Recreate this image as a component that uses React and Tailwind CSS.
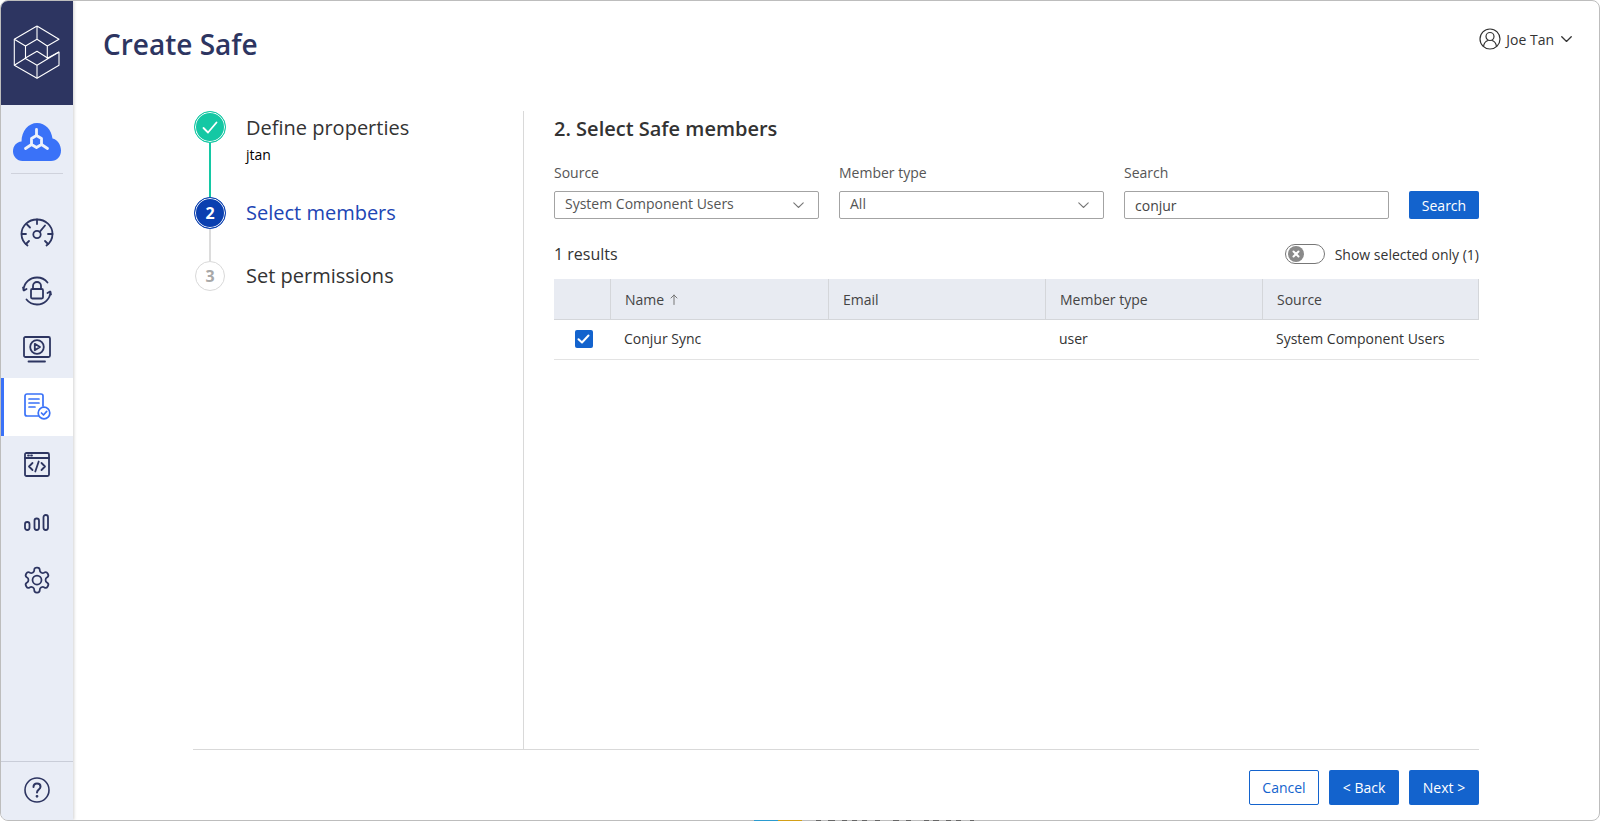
import React from 'react';

const S = '#2d3561';

function Logo() {
  return (
    <svg width="72" height="104" viewBox="0 0 72 104" fill="none" stroke="#fff" strokeWidth="1.100" strokeLinejoin="round">
      <g transform="translate(-1,0)">
        <path d="M37 25 14.300 38.300v26L37 77.300l22-13V51L37 64.300l-12-7 12-7 11 7" />
        <path d="M37 25l22 13.300-11.700 6.700L37 38.300 25.500 45 14.300 38.300M37 25v13.300M25.500 45v12.300M47.300 45v12.300L59 51M14.300 64.300l11.200-7M37 64.300v13" />
      </g>
    </svg>
  );
}

function Cloud() {
  return (
    <svg width="50" height="40" viewBox="0 0 50 40" fill="none">
      <path d="M10.500 39C5 39 1 34.500 1 29.300 1 24 4.500 20 9.500 19.500 9.500 9 16.500 1 25 1S39.500 8 40.500 16.500C45.500 17.500 49 23 49 28.500 49 34.500 45 39 39 39Z" fill="#3a72f8" />
      <g stroke="#eef2fb" strokeWidth="2.800" strokeLinecap="round" strokeLinejoin="round">
        <path d="M24.500 13.500l5 3v6l-5 3-5-3v-6Z" />
        <path d="M24.500 7.500v6M29.500 22.500l6 4M19.500 22.500l-6 4" />
      </g>
    </svg>
  );
}

const sw = { fill: 'none', stroke: S, strokeWidth: 1.800, strokeLinecap: 'round', strokeLinejoin: 'round' };

function Gauge() {
  return (
    <svg width="34" height="30" viewBox="0 0 34 30" {...sw}>
      <path d="M7.500 27.500C3.500 24.500 1.500 20.500 1.500 16 1.500 7.500 8.500 1.500 17 1.500S32.500 7.500 32.500 16c0 4.500-2 8.500-6 11.500" />
      <circle cx="17" cy="16.500" r="3.700" />
      <path d="M19.700 13.800 25 7.500M17 1.500v4.500M1.700 16h4.300M28 16h4.500M6 26l3-3M28 26l-3-3M7 6.500l3 3" />
    </svg>
  );
}
function LockCycle() {
  return (
    <svg width="30" height="30" viewBox="0 0 30 30" {...sw}>
      <path d="M1.500 14C2 7 7.500 1.500 15 1.500c4.500 0 8 1.800 10.500 5M28.500 16c-.5 7-6 12.500-13.500 12.500-4.500 0-8-1.800-10.500-5" />
      <path d="M1 11.500l1 3 2.500-1.500M29 18.500l-1-3-2.500 1.500" />
      <rect x="9" y="13" width="12" height="9.500" rx="1.200" />
      <path d="M11 13v-3a4 4 0 0 1 8 0v3" />
    </svg>
  );
}
function Screen() {
  return (
    <svg width="28" height="27" viewBox="0 0 28 27" {...sw}>
      <rect x="1" y="1" width="26" height="20" rx="1.500" />
      <circle cx="14" cy="11" r="6.800" />
      <path d="M11.800 7.800l5.200 3.200-5.200 3.200Z" />
      <path d="M5.500 25.500h16.500" />
    </svg>
  );
}
function Doc() {
  return (
    <svg width="27" height="27" viewBox="0 0 27 27" fill="none" stroke="#3a72f8" strokeWidth="1.700" strokeLinecap="round" strokeLinejoin="round">
      <path d="M14 23H3a2 2 0 0 1-2-2V3a2 2 0 0 1 2-2h14a2 2 0 0 1 2 2v10" />
      <path d="M5 6h10M5 10h10M5 14h6" />
      <circle cx="20" cy="20" r="5.800" fill="#fff" />
      <path d="M17.500 20l2 2 3.200-3.600" />
    </svg>
  );
}
function Code() {
  return (
    <svg width="26" height="25" viewBox="0 0 26 25" {...sw}>
      <rect x="1" y="1" width="24" height="23" rx="1.500" />
      <path d="M1 6h24" />
      <path d="M4 3.500h1M7 3.500h1" />
      <path d="M8.500 11l-3.500 3.500 3.500 3.500M17.500 11l3.500 3.500-3.500 3.500M14.700 9.500l-3.400 10" />
    </svg>
  );
}
function Bars() {
  return (
    <svg width="26" height="17" viewBox="0 0 26 17" {...sw}>
      <rect x="1" y="8" width="4.500" height="8" rx="2.200" />
      <rect x="10.500" y="4.500" width="4.500" height="11.500" rx="2.200" />
      <rect x="19.500" y="1" width="4.500" height="15" rx="2.200" />
    </svg>
  );
}
function Gear() {
  return (
    <svg width="30" height="30" viewBox="0 0 24 24" fill="none" stroke={S} strokeWidth="1.400" strokeLinecap="round" strokeLinejoin="round">
      <path d="M12.220 2h-.44a2 2 0 0 0-2 2v.18a2 2 0 0 1-1 1.730l-.43.250a2 2 0 0 1-2 0l-.150-.080a2 2 0 0 0-2.730.730l-.220.380a2 2 0 0 0 .730 2.730l.150.100a2 2 0 0 1 1 1.720v.510a2 2 0 0 1-1 1.740l-.150.090a2 2 0 0 0-.730 2.730l.220.380a2 2 0 0 0 2.730.730l.150-.080a2 2 0 0 1 2 0l.430.250a2 2 0 0 1 1 1.730V20a2 2 0 0 0 2 2h.44a2 2 0 0 0 2-2v-.18a2 2 0 0 1 1-1.730l.430-.250a2 2 0 0 1 2 0l.150.080a2 2 0 0 0 2.730-.730l.220-.390a2 2 0 0 0-.730-2.730l-.150-.080a2 2 0 0 1-1-1.740v-.500a2 2 0 0 1 1-1.740l.150-.090a2 2 0 0 0 .730-2.730l-.220-.380a2 2 0 0 0-2.730-.730l-.150.080a2 2 0 0 1-2 0l-.430-.250a2 2 0 0 1-1-1.730V4a2 2 0 0 0-2-2z" />
      <circle cx="12" cy="12" r="3.600" />
    </svg>
  );
}
function Help() {
  return (
    <svg width="26" height="26" viewBox="0 0 26 26" fill="none" stroke={S} strokeWidth="1.600" strokeLinecap="round">
      <circle cx="13" cy="13" r="12" />
      <path d="M9.500 10c0-2.200 1.500-3.500 3.500-3.500s3.500 1.300 3.500 3.200c0 2.800-3.500 2.800-3.500 5.800" strokeWidth="2" />
      <circle cx="13" cy="19.300" r=".6" fill={S} />
    </svg>
  );
}
function User() {
  return (
    <svg width="22" height="22" viewBox="0 0 22 22" fill="none" stroke="#333" strokeWidth="1.200" strokeLinecap="round">
      <circle cx="11" cy="11" r="10" />
      <circle cx="11" cy="8.500" r="4" />
      <path d="M4.500 18.500c.5-3.500 2.500-5.500 4.500-6M17.500 18.500c-.5-3.500-2.500-5.500-4.500-6" />
    </svg>
  );
}
function Chevron({ className, w = 11, color = '#777', sw: s = 1 }) {
  return (
    <svg className={className} width={w} height={w * 0.6} viewBox="0 0 10 6" fill="none" stroke={color} strokeWidth={s} strokeLinecap="round">
      <path d="M.700.700 5 5l4.300-4.300" />
    </svg>
  );
}

function NavItem({ children, active }) {
  return (
    <div className={`h-[58px] pb-[2px] flex items-center justify-center ${active ? 'bg-white border-l-[3px] border-[#3a72f8] pr-[3px]' : ''}`}>
      {children}
    </div>
  );
}

function Sidebar() {
  return (
    <aside className="w-[72px] shrink-0 bg-[#e9edf6] flex flex-col shadow-[1px_0_3px_rgba(0,0,0,0.18)] z-10">
      <div className="h-[104px] bg-[#2d3561] shrink-0"><Logo /></div>
      <div className="h-[69px] shrink-0 flex items-center justify-center mx-[10px] border-b border-[#cfd2dc] pt-[6px]"><Cloud /></div>
      <nav className="mt-[30px] flex flex-col">
        <div className="h-[58px] flex items-center justify-center"><Gauge /></div>
        <div className="h-[58px] flex items-center justify-center"><LockCycle /></div>
        <div className="h-[58px] flex items-center justify-center"><Screen /></div>
        <NavItem active><Doc /></NavItem>
        <NavItem><Code /></NavItem>
        <NavItem><Bars /></NavItem>
        <NavItem><Gear /></NavItem>
      </nav>
      <div className="mt-auto h-[59px] pb-[3px] border-t border-[#c9cdd8] flex items-center justify-center"><Help /></div>
    </aside>
  );
}

function Label({ children }) {
  return <div className="text-[14px] leading-[18px] text-[#555] mb-[9px]">{children}</div>;
}

function SelectBox({ value }) {
  return (
    <div className="h-[28px] border border-[#a3a3a3] rounded-[2px] flex items-center justify-between pl-[10px] pr-[14px] text-[14px] text-[#555]">
      <span className="-mt-[4px]">{value}</span>
      <Chevron />
    </div>
  );
}

const headerCell = 'h-full flex items-center pl-[14px] border-r border-[#d4d6da] text-[14px] text-[#444]';
const cols = 'grid grid-cols-[57px_218px_217px_217px_216px]';

function Btn({ children, outline, className = '' }) {
  return (
    <button className={`w-[70px] rounded-[2px] text-[14px] flex items-center justify-center ${outline ? 'bg-white border border-[#1363cd] text-[#1363cd]' : 'bg-[#1363cd] text-white'} ${className}`}>
      {children}
    </button>
  );
}

function Stepper() {
  return (
    <div className="w-[331px] shrink-0 border-r border-[#d9d9d9] text-[#333]">
      <div className="flex ml-px">
        <div className="w-[52px] shrink-0 flex flex-col items-start">
          <div className="w-[32px] h-[32px] rounded-full bg-[#14c8a4] border border-[#14c8a4] shadow-[inset_0_0_0_1px_#fff] flex items-center justify-center">
            <svg width="16" height="13" viewBox="0 0 16 13" fill="none" stroke="#fff" strokeWidth="1.800" strokeLinecap="round" strokeLinejoin="round"><path d="M1.500 7l4.500 4.500L14.500 1.500" /></svg>
          </div>
          <div className="w-[2px] h-[54px] bg-[#14c8a4] ml-[15px]" />
        </div>
        <div className="pt-[2px]">
          <div className="text-[20px] leading-[30px]">Define properties</div>
          <div className="text-[14px] leading-[20px] text-black mt-[2px]">jtan</div>
        </div>
      </div>
      <div className="flex ml-px">
        <div className="w-[52px] shrink-0 flex flex-col items-start">
          <div className="w-[32px] h-[32px] rounded-full bg-[#0b40b0] border border-[#0b40b0] shadow-[inset_0_0_0_1px_#fff] flex items-center justify-center text-white font-bold text-[16px]">2</div>
          <div className="w-[2px] h-[32px] bg-[#dcdcdc] ml-[15px]" />
        </div>
        <div className="text-[20px] leading-[32px] text-[#2045b4]">Select members</div>
      </div>
      <div className="flex ml-px">
        <div className="w-[52px] shrink-0">
          <div className="w-[30px] h-[30px] ml-px rounded-full border border-[#d9d9d9] flex items-center justify-center text-[#a8a8a8] font-bold text-[16px]">3</div>
        </div>
        <div className="text-[20px] leading-[30px]">Set permissions</div>
      </div>
    </div>
  );
}

function Members() {
  return (
    <div className="flex-1 pl-[30px] flex flex-col min-w-0">
      <h2 className="text-[20px] leading-[24px] font-semibold text-[#333] mt-[6px]">2. Select Safe members</h2>
      <div className="mt-[23px] flex items-end gap-[20px]">
        <div className="w-[265px]"><Label>Source</Label><SelectBox value="System Component Users" /></div>
        <div className="w-[265px]"><Label>Member type</Label><SelectBox value="All" /></div>
        <div className="w-[265px]">
          <Label>Search</Label>
          <div className="h-[28px] border border-[#a3a3a3] rounded-[2px] flex items-center pl-[10px] text-[14px] text-[#444]">conjur</div>
        </div>
        <Btn className="h-[28px]">Search</Btn>
      </div>
      <div className="mt-[25px] h-[20px] flex items-center justify-between">
        <div className="text-[16px] text-[#333]">1 results</div>
        <div className="flex items-center gap-[10px]">
          <div className="w-[40px] h-[20px] rounded-full border border-[#777] bg-white flex items-center pl-[2px]">
            <div className="w-[16px] h-[16px] rounded-full bg-[#8a8a8a] flex items-center justify-center">
              <svg width="8" height="8" viewBox="0 0 8 8" stroke="#fff" strokeWidth="2" strokeLinecap="round"><path d="M1.500 1.500l5 5M6.500 1.500l-5 5" /></svg>
            </div>
          </div>
          <span className="text-[14px] text-[#333]">Show selected only (1)</span>
        </div>
      </div>
      <div className="mt-[15px]">
        <div className={`h-[41px] bg-[#e8ebf2] border-b border-[#d4d6da] ${cols}`}>
          <div className={headerCell} />
          <div className={headerCell}>
            Name
            <svg className="ml-[6px]" width="8" height="11" viewBox="0 0 8 11" fill="none" stroke="#777" strokeWidth="1" strokeLinecap="round" strokeLinejoin="round"><path d="M4 10.500V1M1 4l3-3 3 3" /></svg>
          </div>
          <div className={headerCell}>Email</div>
          <div className={headerCell}>Member type</div>
          <div className={headerCell}>Source</div>
        </div>
        <div className={`h-[40px] border-b border-[#e3e3e3] items-center text-[14px] text-[#333] ${cols}`}>
          <div className="flex justify-center pl-[2px] pb-[2px]">
            <div className="w-[18px] h-[18px] rounded-[2px] bg-[#1363cd] flex items-center justify-center">
              <svg width="13" height="10" viewBox="0 0 13 10" fill="none" stroke="#fff" strokeWidth="2" strokeLinecap="round" strokeLinejoin="round"><path d="M1.500 5.200l3.500 3.300 6.500-7" /></svg>
            </div>
          </div>
          <div className="pl-[13px] pb-[2px]">Conjur Sync</div>
          <div />
          <div className="pl-[13px] pb-[2px]">user</div>
          <div className="pl-[13px] pb-[2px]">System Component Users</div>
        </div>
      </div>
    </div>
  );
}

const peek = [[816,5],[828,7],[842,5],[852,5],[862,5],[875,5],[893,6],[906,5],[924,5],[933,6],[946,5],[956,5],[970,4]];

export default function App() {
  return (
    <div className="w-[1600px] h-[821px] bg-white overflow-hidden relative text-[#333]" style={{ fontFamily: '"Open Sans", "Noto Sans", sans-serif' }}>
      <div className="w-full h-full border border-[#bdbdbd] rounded-[8px] overflow-hidden flex">
        <Sidebar />
        <main className="flex-1 min-w-0 flex flex-col">
          <header className="h-[110px] shrink-0 flex items-start justify-between pl-[30px] pr-[27px]">
            <h1 className="text-[28px] leading-[36px] font-semibold text-[#2d3561] mt-[25px]">Create Safe</h1>
            <div className="mt-[27px] flex items-center gap-[5px] text-[14px] text-[#333]">
              <User />
              <span>Joe Tan</span>
              <Chevron className="ml-[2px]" color="#333" w={11} sw={1.200} />
            </div>
          </header>
          <div className="flex-1 min-h-0 mx-[120px] flex border-b border-[#d9d9d9]">
            <Stepper />
            <Members />
          </div>
          <footer className="h-[70px] shrink-0 mr-[120px] pt-[20px] pb-[15px] flex justify-end gap-[10px]">
            <Btn outline>Cancel</Btn>
            <Btn>&lt; Back</Btn>
            <Btn>Next &gt;</Btn>
          </footer>
        </main>
      </div>
      <div className="absolute left-[754px] bottom-0 h-px w-[24px] bg-[#2a9bd0]" />
      <div className="absolute left-[778px] bottom-0 h-px w-[24px] bg-[#d4a017]" />
      {peek.map(([left, width]) => (
        <div key={left} className="absolute bottom-0 h-px bg-[#666]" style={{ left, width }} />
      ))}
    </div>
  );
}
